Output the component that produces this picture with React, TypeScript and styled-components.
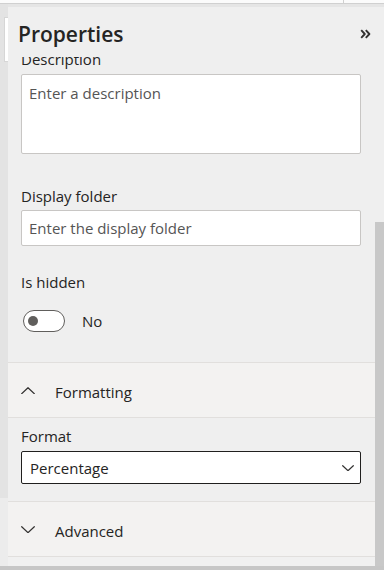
import React from 'react';
import styled, { createGlobalStyle } from 'styled-components';

const GlobalStyle = createGlobalStyle`
  html, body {
    margin: 0;
    padding: 0;
    overflow: hidden;
    background: #e5e5e5;
  }
  * {
    box-sizing: border-box;
  }
`;

const FONT = `'Open Sans', 'Noto Sans', 'Liberation Sans', sans-serif`;

interface IChevronProps {
  up?: boolean;
  width?: number;
}

function Chevron(props: IChevronProps) {
  const w = props.width || 14;
  const h = w / 2;
  const d = props.up
    ? `M0.7 ${ h - 0.3 } L${ w / 2 } 0.7 L${ w - 0.7 } ${ h - 0.3 }`
    : `M0.7 0.7 L${ w / 2 } ${ h - 0.3 } L${ w - 0.7 } 0.7`;
  return (
    <svg width={ w } height={ h } viewBox={ `0 0 ${ w } ${ h }` } fill='none'>
      <path d={ d } stroke='#323130' strokeWidth='1.2' strokeLinejoin='round' strokeLinecap='round'/>
    </svg>
  );
}

function Collapse() {
  return (
    <svg width='11' height='10' viewBox='0 0 11 10' fill='none'>
      <path d='M1.2 1.2 L4.8 5 L1.2 8.8 M5.8 1.2 L9.4 5 L5.8 8.8' stroke='#323130' strokeWidth='1.9' strokeLinejoin='round'/>
    </svg>
  );
}

function App() {
  // the pane is scrolled a little, so the first label hides under the header
  const scrollTop = 8;
  const viewportHeight = 509;
  const thumbHeight = 344;
  const thumbTop = viewportHeight - thumbHeight;

  return (
    <Frame>
      <GlobalStyle/>
      <TopBar>
        <TopTab/>
      </TopBar>
      <Body>
        <LeftStrip>
          <MiniScroll/>
        </LeftStrip>
        <Pane>
          <Header>
            <Title>Properties</Title>
            <IconButton aria-label='Collapse'>
              <Collapse/>
            </IconButton>
          </Header>
          <Viewport>
            <Content $offset={ scrollTop }>
              <Fields>
                <Field>
                  <Label>Description</Label>
                  <TextArea placeholder='Enter a description'/>
                </Field>
                <Field $space={ 32 }>
                  <Label>Display folder</Label>
                  <TextInput placeholder='Enter the display folder'/>
                </Field>
                <Field $space={ 26 }>
                  <Label>Is hidden</Label>
                  <ToggleRow>
                    <Switch>
                      <Knob/>
                    </Switch>
                    <ToggleText>No</ToggleText>
                  </ToggleRow>
                </Field>
              </Fields>
              <SectionHeader>
                <Chevron up/>
                <SectionTitle>Formatting</SectionTitle>
              </SectionHeader>
              <SectionBody>
                <Label>Format</Label>
                <Select>
                  <SelectValue>Percentage</SelectValue>
                  <Chevron width={ 12 }/>
                </Select>
              </SectionBody>
              <SectionHeader>
                <Chevron/>
                <SectionTitle>Advanced</SectionTitle>
              </SectionHeader>
              <SectionEnd/>
            </Content>
            <Rail>
              <Thumb style={ { marginTop: thumbTop, height: thumbHeight } }/>
            </Rail>
          </Viewport>
        </Pane>
      </Body>
      <BottomBar/>
    </Frame>
  );
}

const Frame = styled.div`
  width: 384px;
  height: 570px;
  display: flex;
  flex-direction: column;
  font-family: ${ FONT };
  color: #252423;
  overflow: hidden;
`;

const TopBar = styled.div`
  height: 4px;
  background: #fbfbfb;
  border-bottom: 1px solid #d0d0d0;
  display: flex;
`;

const TopTab = styled.div`
  width: 344px;
  border-right: 1px solid #d0d0d0;
`;

const Body = styled.div`
  flex: 1;
  display: flex;
  min-height: 0;
  background: #e5e5e5;
`;

const LeftStrip = styled.div`
  width: 8px;
  padding: 13px 0 0 4px;
  background: linear-gradient(#e3e3e3 0 494px, #ececec 494px);
`;

const MiniScroll = styled.div`
  width: 4px;
  height: 45px;
  background: #ffffff;
  border: 1px solid #d6d6d6;
  border-right: none;
`;

const Pane = styled.div`
  flex: 1;
  margin-top: 3px;
  display: flex;
  flex-direction: column;
  background: #efefef;
  min-width: 0;
`;

const Header = styled.div`
  height: 50px;
  padding: 13px 13px 0 10px;
  display: flex;
  align-items: flex-start;
  justify-content: space-between;
  position: relative;
  z-index: 1;
  background: #efefef;
`;

const Title = styled.h2`
  margin: 0;
  font-size: 21px;
  line-height: 28px;
  font-weight: 600;
  color: #252423;
`;

const IconButton = styled.button`
  border: none;
  background: none;
  padding: 0;
  margin-top: 9px;
  display: flex;
  cursor: pointer;
`;

const Viewport = styled.div`
  flex: 1;
  display: flex;
  min-height: 0;
  overflow: hidden;
`;

const Content = styled.div<{ $offset: number }>`
  flex: 1;
  min-width: 0;
  margin-top: ${ p => -p.$offset }px;
  display: flex;
  flex-direction: column;
`;

const Rail = styled.div`
  width: 9px;
  display: flex;
  flex-direction: column;
`;

const Thumb = styled.div`
  background: #c8c8c8;
`;

const Fields = styled.div`
  padding: 0 14px 30px 13px;
  display: flex;
  flex-direction: column;
`;

const Field = styled.div<{ $space?: number }>`
  margin-top: ${ p => p.$space || 0 }px;
  display: flex;
  flex-direction: column;
`;

const Label = styled.label`
  font-size: 15px;
  line-height: 20px;
  color: #252423;
  margin-bottom: 5px;
`;

const inputBase = `
  width: 100%;
  border: 1px solid #c8c6c4;
  border-radius: 2px;
  background: #ffffff;
  font-family: ${ FONT };
  font-size: 15px;
  line-height: 20px;
  color: #252423;
  outline: none;
  &::placeholder {
    color: #555555;
    opacity: 1;
  }
`;

const TextArea = styled.textarea`
  ${ inputBase }
  height: 80px;
  padding: 8px 7px;
  resize: none;
`;

const TextInput = styled.input`
  ${ inputBase }
  height: 36px;
  margin-top: -1px;
  padding: 0 7px;
`;

const ToggleRow = styled.div`
  margin-top: 13px;
  padding-left: 2px;
  display: flex;
  align-items: center;
  gap: 17px;
`;

const Switch = styled.div`
  width: 42px;
  height: 22px;
  border: 1px solid #605e5c;
  border-radius: 11px;
  background: #ffffff;
  display: flex;
  align-items: center;
  padding-left: 4px;
`;

const Knob = styled.span`
  width: 10px;
  height: 10px;
  border-radius: 50%;
  background: #605e5c;
`;

const ToggleText = styled.span`
  font-size: 15px;
  line-height: 20px;
  color: #252423;
`;

const SectionHeader = styled.div`
  height: 55px;
  border-top: 1px solid #e1dfdd;
  background: #f3f2f1;
  padding: 1px 0 0 13px;
  display: flex;
  align-items: center;
  gap: 20px;
`;

const SectionTitle = styled.span`
  font-size: 15px;
  line-height: 20px;
  margin-top: 2px;
  color: #252423;
`;

const SectionBody = styled.div`
  border-top: 1px solid #e1dfdd;
  padding: 8px 14px 17px 13px;
  display: flex;
  flex-direction: column;
`;

const Select = styled.div`
  height: 33px;
  border: 1px solid #201f1e;
  border-radius: 2px;
  background: #ffffff;
  display: flex;
  align-items: center;
  justify-content: space-between;
  padding: 0 6px 0 8px;
`;

const SelectValue = styled.span`
  font-size: 15px;
  line-height: 20px;
  color: #252423;
`;

const SectionEnd = styled.div`
  flex: 1;
  border-top: 1px solid #e1dfdd;
  background: #f0f0f0;
`;

const BottomBar = styled.div`
  height: 4px;
  background: #c6c6c6;
`;

export default App;
